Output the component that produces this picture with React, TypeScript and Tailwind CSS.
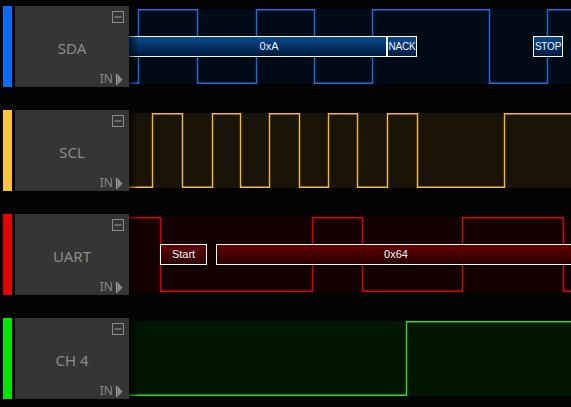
import React from 'react';

type Box = { left: number; width: number; label: string; padLeft?: number; tight?: boolean };

type Channel = {
  name: string;
  bar: string;
  bg: string;
  line: string;
  startHigh: boolean;
  edges: number[];
  boxes: Box[];
  boxBg: string;
};

const W = 442;
const H = 75;

const channels: Channel[] = [
  {
    name: 'SDA',
    bar: 'bg-[#0a6cf5]',
    bg: 'bg-[#010b17]',
    line: '#1a6ee0',
    startHigh: false,
    edges: [9, 68, 127, 185, 243, 360, 418],
    boxes: [
      { left: -4, width: 262, label: '0xA', padLeft: 26 },
      { left: 258, width: 30, label: 'NACK', tight: true },
      { left: 404, width: 30, label: 'STOP', tight: true },
    ],
    boxBg: 'bg-gradient-to-b from-[#0b4a90] to-[#001a3c]',
  },
  {
    name: 'SCL',
    bar: 'bg-[#ffc23c]',
    bg: 'bg-[#1a1408]',
    line: '#f5b93a',
    startHigh: false,
    edges: [23, 53, 83, 111, 140, 170, 199, 228, 258, 288, 375],
    boxes: [],
    boxBg: '',
  },
  {
    name: 'UART',
    bar: 'bg-[#e60000]',
    bg: 'bg-[#140000]',
    line: '#e00000',
    startHigh: true,
    edges: [31, 183, 233, 333, 434],
    boxes: [
      { left: 31, width: 47, label: 'Start' },
      { left: 87, width: 360, label: '0x64' },
    ],
    boxBg: 'bg-gradient-to-b from-[#640000] to-[#2a0000]',
  },
  {
    name: 'CH 4',
    bar: 'bg-[#00e600]',
    bg: 'bg-[#001600]',
    line: '#1ee01e',
    startHigh: false,
    edges: [277],
    boxes: [],
    boxBg: '',
  },
];

function wavePath(startHigh: boolean, edges: number[]) {
  const hi = 0.75;
  const lo = H - 0.75;
  let level = startHigh;
  let d = `M -2 ${level ? hi : lo}`;
  for (const x of edges) {
    const xx = x + 0.5;
    d += ` L ${xx} ${level ? hi : lo}`;
    level = !level;
    d += ` L ${xx} ${level ? hi : lo}`;
  }
  d += ` L ${W + 2} ${level ? hi : lo}`;
  return d;
}

function ChannelPanel({ name }: { name: string }) {
  return (
    <div className="w-[114px] ml-[3px] bg-[#353535] flex flex-col pt-[5px] pr-[5px] pb-[2px]">
      <div className="flex justify-end">
        <svg width="12" height="12" viewBox="0 0 12 12">
          <rect x="0.5" y="0.5" width="11" height="11" fill="none" stroke="#8a8a8a" strokeWidth="1" />
          <line x1="2.5" y1="6" x2="9.5" y2="6" stroke="#8a8a8a" strokeWidth="1.2" />
        </svg>
      </div>
      <div className="flex-1 flex items-center justify-center pl-[5px] text-[15px] text-[#8c8c8c] font-['Noto_Sans',sans-serif]">
        {name}
      </div>
      <div className="flex justify-end items-center gap-[3px] pr-[1px]">
        <span className="text-[12px] leading-none text-[#8a8a8a] font-['Noto_Sans',sans-serif]">IN</span>
        <svg width="7" height="11" viewBox="0 0 7 11">
          <rect x="0" y="0" width="1.2" height="11" fill="#a0a0a0" />
          <polygon points="1.5,0 6.5,5.5 1.5,11" fill="#8a8a8a" />
        </svg>
      </div>
    </div>
  );
}

function Wave({ ch }: { ch: Channel }) {
  return (
    <div className={`relative flex-1 self-center h-[75px] overflow-hidden ${ch.bg}`}>
      <svg width={W} height={H} className="block">
        <path d={wavePath(ch.startHigh, ch.edges)} fill="none" stroke={ch.line} strokeWidth="1.4" />
      </svg>
      {ch.boxes.map((b) => (
        <div
          key={b.label}
          className={`absolute top-[27px] h-[21px] border border-white flex items-center justify-center text-[#eef4ff] font-['Liberation_Sans',sans-serif] ${
            b.tight ? 'text-[10px] tracking-[-0.2px]' : 'text-[11px]'
          } ${ch.boxBg}`}
          style={{ left: b.left, width: b.width, paddingLeft: b.padLeft ?? 0 }}
        >
          {b.label}
        </div>
      ))}
      <div className="absolute inset-y-0 left-0 w-[10px] bg-gradient-to-r from-black/60 to-transparent" />
    </div>
  );
}

export default function App() {
  return (
    <div className="w-[571px] h-[407px] bg-[#030303] overflow-hidden pt-[6px] flex flex-col gap-[23px]">
      {channels.map((ch) => (
        <div key={ch.name} className="flex h-[81px]">
          <div className={`w-[9px] ml-[3px] ${ch.bar}`} />
          <ChannelPanel name={ch.name} />
          <Wave ch={ch} />
        </div>
      ))}
    </div>
  );
}
